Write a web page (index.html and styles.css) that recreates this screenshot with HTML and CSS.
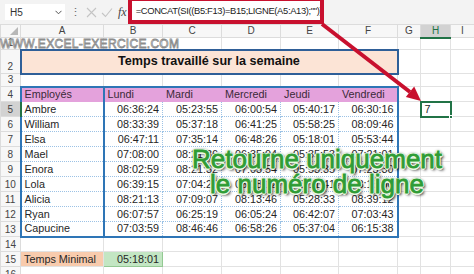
FILE: index.html
```html
<!DOCTYPE html>
<html lang="fr">
<head>
    <meta charset="utf-8">
    <title>Temps travaillé sur la semaine</title>
    <link rel="stylesheet" href="styles.css">
</head>
<body>
<div class="sheet">
    <div class="formula-bar">
        <div class="name-box">
            <span>H5</span>
            <svg class="chev" width="7" height="5" viewBox="0 0 7 5"><polyline points="0.5,0.8 3.5,3.8 6.5,0.8" fill="none" stroke="#555" stroke-width="1"/></svg>
        </div>
        <span class="dots">⋮</span>
        <svg class="ico" width="11" height="11" viewBox="0 0 11 11"><path d="M1 1 L10 10 M10 1 L1 10" stroke="#c4c4c4" stroke-width="1.1" fill="none"/></svg>
        <svg class="ico" width="12" height="11" viewBox="0 0 12 11"><path d="M1 6 L4.5 9.5 L11 1.5" stroke="#c4c4c4" stroke-width="1.1" fill="none"/></svg>
        <span class="fx">fx</span>
        <div class="formula">=CONCAT(SI((B5:F13)=B15;LIGNE(A5:A13);""))</div>
    </div>

    <table class="grid">
        <colgroup>
            <col class="w-rh"><col class="w-a"><col class="w-t"><col class="w-t"><col class="w-t"><col class="w-e"><col class="w-t"><col class="w-g"><col class="w-h"><col class="w-i">
        </colgroup>
        <tr class="r-head">
            <th class="corner"><span class="tri"></span></th>
            <th>A</th><th>B</th><th>C</th><th>D</th><th>E</th><th>F</th><th>G</th><th class="sel-col">H</th><th>I</th>
        </tr>
        <tr class="r-1">
            <th class="rh">1</th><td></td><td></td><td></td><td></td><td></td><td></td><td></td><td></td><td></td>
        </tr>
        <tr class="r-2">
            <th class="rh">2</th><td class="title" colspan="6">Temps travaillé sur la semaine</td><td></td><td></td><td></td>
        </tr>
        <tr class="r-3">
            <th class="rh">3</th><td></td><td></td><td></td><td></td><td></td><td></td><td></td><td></td><td></td>
        </tr>
        <tr class="r-n">
            <th class="rh">4</th>
            <td class="hd tl tr tt">Employés</td><td class="hd tt">Lundi</td><td class="hd tt">Mardi</td><td class="hd tt">Mercredi</td><td class="hd tt">Jeudi</td><td class="hd tt fr">Vendredi</td>
            <td></td><td></td><td></td>
        </tr>
        <tr class="r-n">
            <th class="rh sel-row">5</th>
            <td class="t tl tr">Ambre</td><td class="t n">06:36:24</td><td class="t n">05:23:55</td><td class="t n">06:00:54</td><td class="t n">05:40:17</td><td class="t n fr">06:30:16</td>
            <td></td><td class="active">7<span class="handle"></span></td><td></td>
        </tr>
        <tr class="r-n">
            <th class="rh">6</th>
            <td class="t tl tr">William</td><td class="t n">08:33:39</td><td class="t n">05:37:18</td><td class="t n">06:41:25</td><td class="t n">05:58:25</td><td class="t n fr">08:09:46</td>
            <td></td><td></td><td></td>
        </tr>
        <tr class="r-n">
            <th class="rh">7</th>
            <td class="t tl tr">Elsa</td><td class="t n">06:47:11</td><td class="t n">07:35:14</td><td class="t n">06:48:26</td><td class="t n">05:18:01</td><td class="t n fr">05:53:44</td>
            <td></td><td></td><td></td>
        </tr>
        <tr class="r-n">
            <th class="rh">8</th>
            <td class="t tl tr">Mael</td><td class="t n">07:08:00</td><td class="t n">08:21:36</td><td class="t n">06:35:04</td><td class="t n">05:35:53</td><td class="t n fr">07:21:01</td>
            <td></td><td></td><td></td>
        </tr>
        <tr class="r-n">
            <th class="rh">9</th>
            <td class="t tl tr">Enora</td><td class="t n">08:02:59</td><td class="t n">08:21:32</td><td class="t n">07:03:54</td><td class="t n">05:53:35</td><td class="t n fr">07:23:30</td>
            <td></td><td></td><td></td>
        </tr>
        <tr class="r-n">
            <th class="rh">10</th>
            <td class="t tl tr">Lola</td><td class="t n">06:39:15</td><td class="t n">07:04:28</td><td class="t n">06:18:12</td><td class="t n">05:11:41</td><td class="t n fr">08:15:50</td>
            <td></td><td></td><td></td>
        </tr>
        <tr class="r-n">
            <th class="rh">11</th>
            <td class="t tl tr">Alicia</td><td class="t n">08:21:13</td><td class="t n">07:09:07</td><td class="t n">08:13:46</td><td class="t n">05:28:33</td><td class="t n fr">08:39:12</td>
            <td></td><td></td><td></td>
        </tr>
        <tr class="r-n">
            <th class="rh">12</th>
            <td class="t tl tr">Ryan</td><td class="t n">06:07:57</td><td class="t n">06:25:19</td><td class="t n">06:05:24</td><td class="t n">06:42:07</td><td class="t n fr">07:03:43</td>
            <td></td><td></td><td></td>
        </tr>
        <tr class="r-n">
            <th class="rh">13</th>
            <td class="t tl tr tb">Capucine</td><td class="t n tb">07:03:59</td><td class="t n tb">08:46:46</td><td class="t n tb">06:58:26</td><td class="t n tb">05:37:04</td><td class="t n fr tb">06:15:38</td>
            <td></td><td></td><td></td>
        </tr>
        <tr class="r-n">
            <th class="rh">14</th><td></td><td></td><td></td><td></td><td></td><td></td><td></td><td></td><td></td>
        </tr>
        <tr class="r-n">
            <th class="rh">15</th>
            <td class="min-label">Temps Minimal</td><td class="min-value n">05:18:01</td>
            <td></td><td></td><td></td><td></td><td></td><td></td><td></td>
        </tr>
        <tr class="r-n">
            <th class="rh">16</th><td></td><td></td><td></td><td></td><td></td><td></td><td></td><td></td><td></td>
        </tr>
    </table>

    <div class="watermark">WWW.EXCEL-EXERCICE.COM</div>

    <svg class="arrow" width="474" height="274" viewBox="0 0 474 274">
        <line x1="322" y1="24" x2="410" y2="92" stroke="#c8102e" stroke-width="4"/>
        <polygon points="421,101 405.8,96.9 414.2,86.5" fill="#c8102e"/>
    </svg>

    <div class="callout">Retourne uniquement<br>le numéro de ligne</div>
</div>
</body>
</html>
```

FILE: styles.css
```css
* {
    margin: 0;
    padding: 0;
    box-sizing: border-box;
}

body {
    background: #fff;
    font-family: "Liberation Sans", Arial, sans-serif;
    color: #262626;
}

.sheet {
    position: relative;
    width: 474px;
    height: 274px;
    overflow: hidden;
}

/* formula bar */
.formula-bar {
    display: flex;
    align-items: center;
    height: 24px;
    background: #f3f3f3;
}

.name-box {
    display: flex;
    align-items: center;
    justify-content: space-between;
    width: 60px;
    height: 16px;
    margin-left: 5px;
    padding: 0 3px 0 5px;
    background: #fff;
    font-size: 10px;
    color: #333;
}

.dots {
    width: 14px;
    margin-left: 3px;
    font-size: 11px;
    color: #666;
    text-align: center;
}

.ico {
    margin-left: 4px;
}

.fx {
    margin: 0 1px 0 5px;
    font-family: "Liberation Serif", serif;
    font-style: italic;
    font-size: 12px;
    color: #444;
}

.formula {
    display: flex;
    align-items: center;
    align-self: stretch;
    flex: 0 0 196px;
    margin-top: -2px;
    padding-left: 4px;
    background: #fff;
    border: 4px solid #c8102e;
    border-top-width: 3px;
    font-size: 9.4px;
    letter-spacing: -0.35px;
    color: #222;
    white-space: nowrap;
    overflow: hidden;
}

/* grid */
.grid {
    width: 474px;
    table-layout: fixed;
    border-collapse: collapse;
    font-size: 10.8px;
}

.w-rh { width: 20px; }
.w-a { width: 83px; }
.w-t { width: 59px; }
.w-e { width: 58px; }
.w-g { width: 23px; }
.w-h { width: 30px; }
.w-i { width: 24px; }

.r-head { height: 13px; }
.r-1 { height: 11px; }
.r-2 { height: 24px; }
.r-3 { height: 13px; }
.r-n { height: 15px; }

th {
    background: #f7f7f7;
    border: 1px solid #dcdcdc;
    font-weight: normal;
    font-size: 10px;
    color: #444;
    line-height: 1;
}

.corner {
    position: relative;
}

.tri {
    position: absolute;
    right: 2px;
    bottom: 2px;
    border-style: solid;
    border-width: 0 0 8px 8px;
    border-color: transparent transparent #b7b7b7 transparent;
}

.rh {
    text-align: center;
    vertical-align: bottom;
    padding-bottom: 1px;
}

.sel-col {
    background: #d2d2d2;
    border-bottom: 2px solid #217346;
    color: #217346;
}

.sel-row {
    background: #d2d2d2;
    border-right: 2px solid #217346;
}

td {
    border: 1px solid #e2e2e2;
    padding: 0 3px;
    line-height: 1;
    white-space: nowrap;
    overflow: hidden;
}

.title {
    background: #fce4d6;
    border: 2px solid #2f5f98;
    text-align: center;
    font-weight: bold;
    font-size: 12.6px;
    color: #111;
    overflow: visible;
}

.hd {
    background: #e4a2dc;
    border: 1px solid #e4a2dc;
    color: #3a2a38;
}

.t {
    border: 1px dotted #9cc2e5;
}

.tl { border-left: 2px solid #2e75b6; }
.tr { border-right: 2px solid #2e75b6; }
.tt { border-top: 2px solid #2e75b6; }
.tb { border-bottom: 2px solid #2e75b6; }
.fr { border-right: 2px solid #2e75b6; }

.n {
    text-align: right;
}

.active {
    position: relative;
    border: 2px solid #217346;
    overflow: visible;
}

.handle {
    position: absolute;
    right: -3px;
    bottom: -3px;
    width: 4px;
    height: 4px;
    background: #217346;
    border: 1px solid #fff;
}

.min-label {
    background: #f8cbad;
}

.min-value {
    background: #c3e6c3;
    border: 1px solid #93c993;
}

/* overlays */
.watermark {
    position: absolute;
    left: 0;
    top: 37px;
    font-size: 12px;
    letter-spacing: 0.3px;
    color: #fff;
    -webkit-text-stroke: 0.8px #8c8c8c;
    white-space: nowrap;
}

.arrow {
    position: absolute;
    left: 0;
    top: 0;
    pointer-events: none;
}

.callout {
    position: absolute;
    left: 188px;
    top: 147px;
    width: 258px;
    text-align: center;
    font-size: 26px;
    line-height: 25px;
    color: #2f9c35;
    -webkit-text-stroke: 0.8px #2f9c35;
    text-shadow:
        1.5px 0 0 #eaf9e4, -1.5px 0 0 #eaf9e4, 0 1.5px 0 #eaf9e4, 0 -1.5px 0 #eaf9e4,
        1px 1px 0 #eaf9e4, -1px -1px 0 #eaf9e4, 1px -1px 0 #eaf9e4, -1px 1px 0 #eaf9e4,
        2px 2px 3px #000, 0 0 3px #0d2a0d;
    white-space: nowrap;
}
```
